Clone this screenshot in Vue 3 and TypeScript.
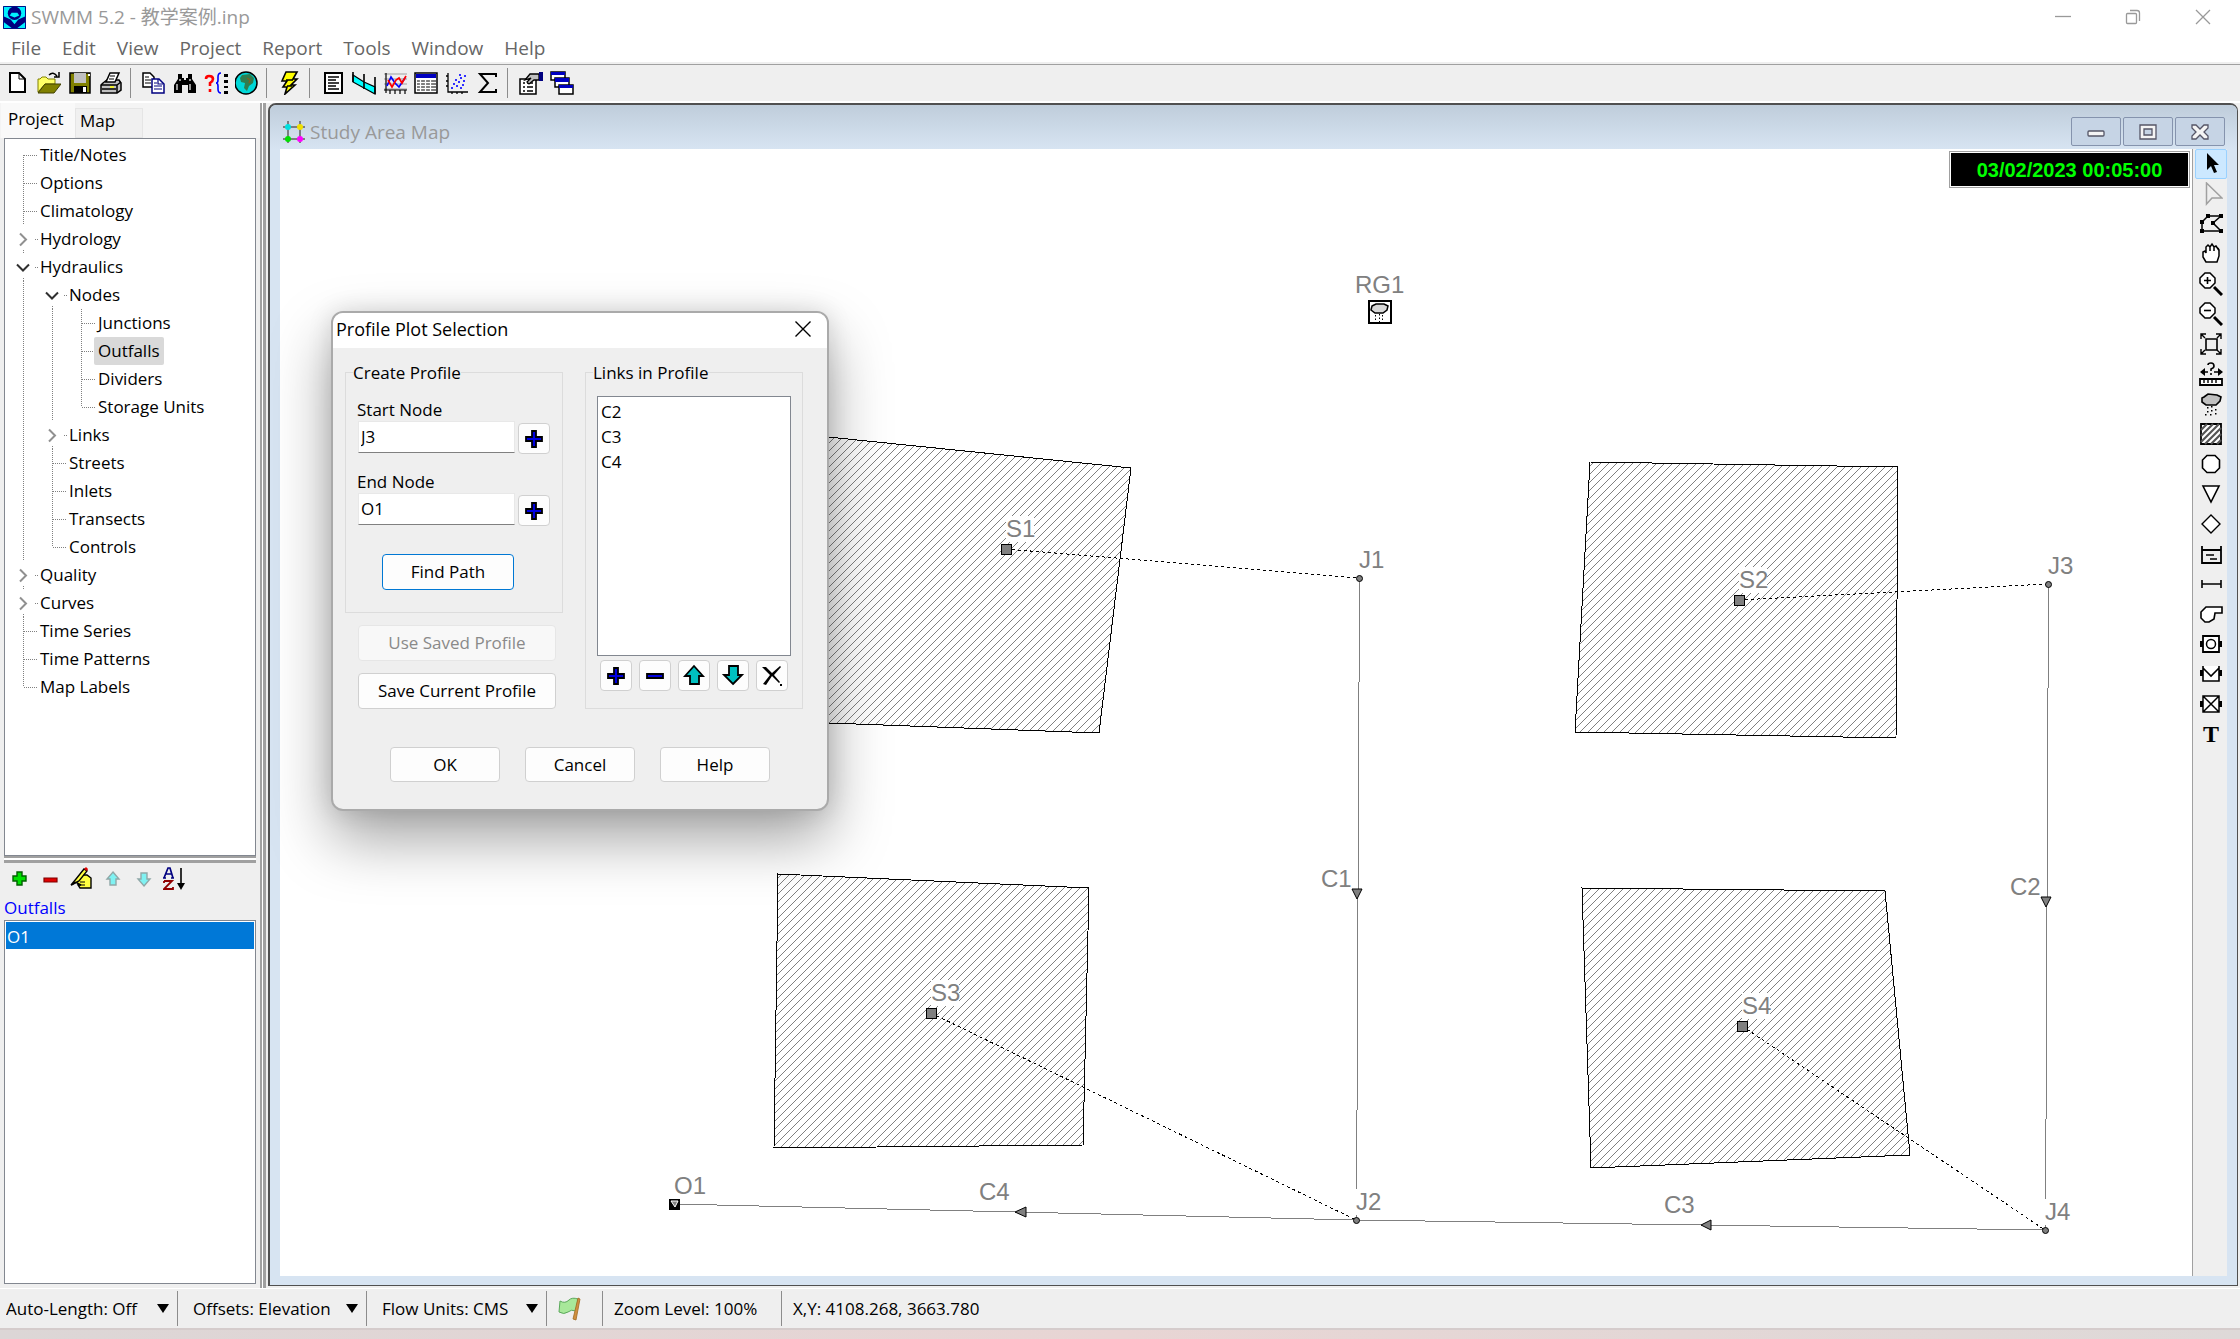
<script setup lang="ts">
import { ref } from 'vue'

/** One shape of an icon: path data, fill, stroke, stroke width */
type Shape = [d: string, fill: string, stroke?: string, width?: number]
interface Tool { name: string; shapes: Shape[] }
interface TreeRow { label: string; cells: string[]; selected?: boolean }

const K = '#000'
const N = 'none'

const menus = ['File', 'Edit', 'View', 'Project', 'Report', 'Tools', 'Window', 'Help']

const toolGroups: Tool[][] = [
  [
    { name: 'New', shapes: [['M4 2H13L19 8V21H4Z', '#fff', K, 2], ['M13 2V8H19', N, K, 1]] },
    { name: 'Open', shapes: [
      ['M1 21V8H3L5 6H9L11 8H18V13H8L1 21Z', '#ffff66', '#808000', 1],
      ['M1 22L8 13H24L17 22Z', '#808000', '#404000', 1],
      ['M12 4Q16 0 20 5M22 1V6H17', N, K, 1.5]] },
    { name: 'Save', shapes: [
      ['M2 2H22V22H2Z', '#808000', K, 1.5], ['M6 2H18V12H6Z', '#c0c0c0'],
      ['M6 15H19V22H6Z', K], ['M15 16H18V21H15Z', '#fff'], ['M20 3H22V5H20Z', '#fff']] },
    { name: 'Print', shapes: [
      ['M4 12L8 9H20L22 12V19L18 22H2V14Z', '#c0c0c0', K, 1.5],
      ['M7 11L11 2H20L16 11Z', '#fff', K, 1.5], ['M11 5H16M10 8H15', N, K, 1.2],
      ['M2 14H18V22M18 14L22 11M3 18H17', N, K, 1.5], ['M11 16H15', N, '#ffff00', 1.5]] },
  ],
  [
    { name: 'Copy', shapes: [
      ['M1 2H8L12 6V16H1Z', '#fff', K, 1.5], ['M3 6H7M3 9H9M3 12H9', N, K, 1.2],
      ['M10 8H17L22 13V22H10Z', '#fff', '#000080', 1.5], ['M16 8V13H21M12 12H15M12 15H20M12 18H20', N, '#000080', 1.2]] },
    { name: 'Find', shapes: [
      ['M5 3H9V7H11V9H13V7H15V3H19V8L23 14V22H15V14H9V22H1V14L5 8Z', K],
      ['M4 13V19M17 13V19M7 8V10M17 8V10', N, '#fff', 1.2]] },
    { name: 'Query', shapes: [
      ['M2 8Q2 5 5 5Q9 5 9 8Q9 10 6 12V15M6 18V21', N, '#ff0000', 2.6],
      ['M17 2Q14 2 14 6V9Q14 12 12 12Q14 12 14 15V18Q14 22 17 22', N, '#0000ff', 1.6],
      ['M20 3H24V6H20ZM20 9H24V12H20ZM20 15H24V17H20ZM20 20H24V23H20Z', K]] },
    { name: 'World', shapes: [
      ['M11 1A11 11 0 1 1 11 23A11 11 0 1 1 11 1Z', '#00d8d8', K, 1.5],
      ['M7 4L15 3L19 7L18 12L14 15L12 20L9 17L10 12L6 11L5 7Z', '#2f7d4f'],
      ['M12 7L15 9L14 12', N, '#806020', 1.4]] },
  ],
  [
    { name: 'Run', shapes: [['M8 1H19L15 8H19L13 14H17L7 23L9 16H5L9 10H4Z', '#ffff00', K, 1.6], ['M8 9H15M9 15H14', N, K, 1.4]] },
  ],
  [
    { name: 'Report', shapes: [['M4 2H21V22H4Z', '#fff', K, 2], ['M7 6H18M7 9H15M7 12H18M7 15H15M7 18H18', N, K, 1.3]] },
    { name: 'Profile', shapes: [
      ['M1 4L12 11L23 16V23L12 17L1 11Z', '#00ffff', K, 1.2],
      ['M1 1V11M12 3V18M23 6V23', N, K, 1.6]] },
    { name: 'Graph', shapes: [
      ['M1 3H24M1 8H24M1 13H24M1 18H24', N, '#a0a0a0', 1.2], ['M3 2V22M1 19H24M7 19V23M12 19V23M17 19V23M22 19V23', N, K, 1.2],
      ['M4 15L8 6L12 12L16 16L22 7', N, '#0000ff', 1.7], ['M5 9L9 16L13 9L16 7L19 12L23 5', N, '#ff0000', 1.7]] },
    { name: 'Table', shapes: [
      ['M1 2H23V22H1Z', '#fff', K, 1.5], ['M2 3H22V7H2Z', '#0000c0'],
      ['M3 10H22M3 13H22M3 16H22M3 19H22', N, K, 1.2], ['M6.5 8V21M11.5 8V21M16.5 8V21', N, '#fff', 1.2]] },
    { name: 'Scatter', shapes: [
      ['M3 2V21H23M1 5H3M1 10H3M1 15H3M7 21V23M12 21V23M17 21V23', N, K, 1.3],
      ['M6 16H8V18H6ZM8 12H10V14H8ZM11 14H13V16H11ZM13 10H15V12H13ZM10 8H12V10H10ZM15 6H17V8H15ZM18 9H20V11H18ZM19 4H21V6H19ZM14 3H16V5H14ZM17 13H19V15H17ZM15 16H17V18H15Z', '#3030ff']] },
    { name: 'Statistics', shapes: [['M20 6V3H4L12 12L4 21H20V18', N, K, 2]] },
  ],
  [
    { name: 'Options', shapes: [
      ['M1 8H17V23H1Z', '#fff', K, 1.5], ['M4 12H6M8 12H14M4 16H6M8 16H14M4 20H6M8 20H14', N, K, 1.4],
      ['M6 9L11 3H20V9H15L10 13L8 11L12 7Z', '#c0c0c0', K, 1.3], ['M20 1H24V10H20Z', '#000080']] },
    { name: 'Windows', shapes: [
      ['M1 1H15V9H1Z', '#fff', K, 1.5], ['M1 1H15V4H1Z', '#0000c0'],
      ['M5 7H19V16H5Z', '#fff', K, 1.5], ['M5 7H19V11H5Z', '#0000c0'],
      ['M9 14H23V23H9Z', '#fff', K, 1.5], ['M9 14H23V17H9Z', '#0000c0']] },
  ],
]

const mapTools: Tool[] = [
  { name: 'Select Object', shapes: [['M8 1V18L12 14L15 21L18 20L15 13H20Z', K]] },
  { name: 'Select Vertex', shapes: [['M7.5 1V22L13 16H23Z', N, '#a0a0a0', 1.5]] },
  { name: 'Select Region', shapes: [
    ['M9 4H22L14 11L22 19H3V10L9 4', N, K, 1.5],
    ['M7 2H11V6H7ZM20 2H24V6H20ZM1 8H5V12H1ZM12 9H16V13H12ZM1 17H5V21H1ZM20 17H24V21H20Z', K]] },
  { name: 'Pan', shapes: [['M7 20L4 15V10L6 9L7 11V5L9 3L11 5L13 2L15 5L17 4L19 7V6L20 8V14L18 20ZM11 5V9M15 5V9', '#fff', K, 1.5]] },
  { name: 'Zoom In', shapes: [['M6 1H11L16 6V11L11 16H6L1 11V6Z', '#fff', K, 1.5], ['M8.5 5V12M5 8.5H12', N, K, 1.6], ['M15 15L23 23', N, K, 3]] },
  { name: 'Zoom Out', shapes: [['M6 1H11L16 6V11L11 16H6L1 11V6Z', '#fff', K, 1.5], ['M5 8.5H12', N, K, 1.6], ['M15 15L23 23', N, K, 3]] },
  { name: 'Full Extent', shapes: [['M7 7H18V18H7Z', N, K, 1.6], ['M2 7V2H7M2 2L6 6M17 2H22V7M22 2L18 6M2 17V22H7M2 22L6 18M22 17V22H17M22 22L18 18', N, K, 1.4]] },
  { name: 'Measure', shapes: [
    ['M1 17H23V23H1Z', '#fff', K, 1.8], ['M5 17V21M9 17V21M13 17V21M17 17V21', N, K, 1.4],
    ['M9 3Q9 1 12 1Q15 1 15 4Q15 6 12 7V9M12 11V13', N, K, 1.6], ['M2 10H9M15 10H23', N, K, 1.6],
    ['M1 10L6 6V14ZM24 10L19 6V14Z', K]] },
  { name: 'Rain Gage', shapes: [
    ['M5 5L9 2L18 3L22 5L21 9L17 13H7L3 10V6Z', '#c0c0c0', K, 1.6],
    ['M8 15H9.5V16.5H8ZM12 14H13.5V15.5H12ZM8 19H9.5V20.5H8ZM12 18H13.5V19.5H12ZM16 17H17.5V18.5H16ZM6 22H7.5V23.5H6ZM11 22H12.5V23.5H11ZM16 21H17.5V22.5H16Z', K]] },
  { name: 'Subcatchment', shapes: [['M2 2H22V22H2Z', '#fff', K, 1.8], ['M2 8L8 2M2 14L14 2M2 20L20 2M6 22L22 6M12 22L22 12M18 22L22 18', N, '#555', 2.2]] },
  { name: 'Junction', shapes: [['M8 3.5H16L20.5 8V16L16 20.5H8L3.5 16V8Z', '#fff', K, 1.6]] },
  { name: 'Outfall', shapes: [['M4 4H20L12 20Z', '#fff', K, 1.6]] },
  { name: 'Divider', shapes: [['M12 3L21 12L12 21L3 12Z', '#fff', K, 1.4]] },
  { name: 'Storage Unit', shapes: [['M3 4V21H22V4M3 8H22', N, K, 1.8], ['M7 13H15M11 17H18', N, K, 1.6]] },
  { name: 'Conduit', shapes: [['M3 12H22M3 8V16M22 8V16', N, K, 1.6]] },
  { name: 'Pump', shapes: [['M23 5V11H16L15 17L10 20H6L2 16V10L7 5Z', '#fff', K, 1.6]] },
  { name: 'Orifice', shapes: [['M4 4H20V20H4Z', '#fff', K, 1.8], ['M12 7.5A4.5 4.5 0 1 1 12 16.5A4.5 4.5 0 1 1 12 7.5Z', N, K, 1.5], ['M1 9H4V15H1ZM20 9H23V15H20Z', K]] },
  { name: 'Weir', shapes: [['M4 4V19H20V4M4 6L12 14L20 6', '#fff', K, 1.6], ['M1 8H4V14H1ZM20 8H23V14H20Z', K]] },
  { name: 'Outlet', shapes: [['M4 4H20V20H4ZM4 4L20 20M20 4L4 20', '#fff', K, 1.5], ['M1 9H4V15H1ZM20 9H23V15H20Z', K]] },
  { name: 'Label', shapes: [] },
]

const objectTools: Tool[] = [
  { name: 'Add', shapes: [['M9 5H14V9H18V14H14V18H9V14H5V9H9Z', '#00e000', '#006000', 1.4]] },
  { name: 'Delete', shapes: [['M5 11H18V15H5Z', '#e00000', '#800000', 1.2]] },
  { name: 'Edit', shapes: [
    ['M6 13L12 8H17L21 11V21H10L8 18H11L7 16Z', '#ffff40', K, 1.4],
    ['M1 18L6 12L14 2L17 4L9 14L5 16Z', '#ffff40', K, 1.4], ['M14 2L16 0L18 2L17 4Z', '#e00000'],
    ['M1 19L5 14L6 16Z', K], ['M9 18H15M10 15H15', N, K, 1.2]] },
  { name: 'Move Up', shapes: [['M12 5L18 12H15V18H9V12H6Z', '#7ff2f2', '#90a8a8', 1.4]] },
  { name: 'Move Down', shapes: [['M12 19L18 12H15V6H9V12H6Z', '#7ff2f2', '#90a8a8', 1.4]] },
  { name: 'Sort', shapes: [
    ['M1 11L5 1H7L10 11M3 7H9M0 11H3M8 11H11', N, '#000080', 1.7],
    ['M1 14H9L1 22H10V20M1 14V16', N, '#900000', 1.8],
    ['M18 1V20', N, K, 1.6], ['M14 16H22L18 23Z', K]] },
]

const plus: Shape[] = [['M10 4H14V10H20V14H14V20H10V14H4V10H10Z', '#0000e0', K, 1.8]]
const linkTools: Tool[] = [
  { name: 'Add link', shapes: plus },
  { name: 'Remove link', shapes: [['M4 10H20V14H4Z', '#0000e0', K, 1.8]] },
  { name: 'Move link up', shapes: [['M12 2L21 12H17V20H8V12H3Z', '#00c0c0', K, 1.8]] },
  { name: 'Move link down', shapes: [['M12 20L21 11H17V2H8V11H3Z', '#00c0c0', K, 1.8]] },
  { name: 'Clear links', shapes: [['M2 3L6 3L12 9L20 2L21 3L14 11L20 18L19 19L12 12L6 21L3 20L10 11Z', K], ['M20 20H22V22H20Z', K]] },
]

const tree: TreeRow[] = [
  { label: 'Title/Notes', cells: ['first'] },
  { label: 'Options', cells: ['tee'] },
  { label: 'Climatology', cells: ['tee'] },
  { label: 'Hydrology', cells: ['closed'] },
  { label: 'Hydraulics', cells: ['open'] },
  { label: 'Nodes', cells: ['line', 'open'] },
  { label: 'Junctions', cells: ['line', 'line', 'tee'] },
  { label: 'Outfalls', cells: ['line', 'line', 'tee'], selected: true },
  { label: 'Dividers', cells: ['line', 'line', 'tee'] },
  { label: 'Storage Units', cells: ['line', 'line', 'end'] },
  { label: 'Links', cells: ['line', 'closed'] },
  { label: 'Streets', cells: ['line', 'tee'] },
  { label: 'Inlets', cells: ['line', 'tee'] },
  { label: 'Transects', cells: ['line', 'tee'] },
  { label: 'Controls', cells: ['line', 'end'] },
  { label: 'Quality', cells: ['closed'] },
  { label: 'Curves', cells: ['closed'] },
  { label: 'Time Series', cells: ['tee'] },
  { label: 'Time Patterns', cells: ['tee'] },
  { label: 'Map Labels', cells: ['end'] },
]
const guides: Record<string, string> = {
  first: 'M13.5 14V28M14 14.5H28',
  tee: 'M13.5 0V28M14 14.5H28',
  end: 'M13.5 0V14M14 14.5H28',
  line: 'M13.5 0V28',
  closed: 'M13.5 25V28M25 14.5H28',
  open: 'M13.5 25V28M25 14.5H28',
}

const areas = [
  '640,420 828,437 1131,468 1099,733 640,716',
  '1590,462 1898,467 1896,738 1575,732',
  '778,874 1089,888 1083,1145 774,1148',
  '1582,888 1885,891 1910,1155 1591,1168',
]
const centroids = [[1006, 549], [1739, 600], [931, 1013], [1742, 1026]]
const runoff = ['M1006 549L1359 578', 'M1739 600L2048 584', 'M931 1013L1356 1220', 'M1742 1026L2045 1230']
const conduits = ['M1359.5 578L1356.5 1220', 'M2048.5 584L2045.5 1230', 'M2045 1230L1356 1220', 'M1356 1220L674 1204']
const junctions = [[1359, 578], [2048, 584], [1356, 1220], [2045, 1230]]
const arrows = [
  'M1352 889H1362L1357 899Z', 'M2041 897H2051L2046 907Z',
  'M1711 1220V1230L1701 1225Z', 'M1026 1207V1217L1015 1212Z',
]
const mapLabels = [
  { t: 'RG1', x: 1355, y: 293 }, { t: 'S1', x: 1006, y: 537 }, { t: 'S2', x: 1739, y: 588 },
  { t: 'S3', x: 931, y: 1001 }, { t: 'S4', x: 1742, y: 1014 }, { t: 'J1', x: 1359, y: 568 },
  { t: 'J3', x: 2048, y: 574 }, { t: 'J2', x: 1356, y: 1210 }, { t: 'J4', x: 2045, y: 1220 },
  { t: 'C1', x: 1321, y: 887 }, { t: 'C2', x: 2010, y: 895 }, { t: 'C3', x: 1664, y: 1213 },
  { t: 'C4', x: 979, y: 1200 }, { t: 'O1', x: 674, y: 1194 },
]

const startNode = ref('J3')
const endNode = ref('O1')
const currentObject = ref('O1')
const links = ['C2', 'C3', 'C4']
</script>

<template>
  <div class="app">
    <header class="titlebar">
      <svg class="logo" viewBox="0 0 24 24">
        <rect width="24" height="24" fill="#00f0ff" />
        <circle cx="12" cy="7.5" r="7" fill="#000080" />
        <path d="M1 11L8 14L12 19L16 14L23 11V17L15 23H9L1 17Z" fill="#000080" />
        <path d="M7 10L9 7H15L17 10L12 12Z" fill="#00f0ff" />
        <path d="M0.5 0.5H23.5V23.5H0.5Z" stroke="#000080" />
      </svg>
      <h1>SWMM 5.2 - 教学案例.inp</h1>
      <button class="win" aria-label="Minimize"><svg viewBox="0 0 16 16"><path d="M0 7.5H16" /></svg></button>
      <button class="win" aria-label="Restore"><svg viewBox="0 0 16 16"><path d="M2.5 4.5H10.5Q11.5 4.5 11.5 5.5V13.5Q11.5 14.5 10.5 14.5H2.5Q1.5 14.5 1.5 13.5V5.5Q1.5 4.5 2.5 4.5ZM5 1.5H12Q14.5 1.5 14.5 4V12" /></svg></button>
      <button class="win" aria-label="Close"><svg viewBox="0 0 16 16"><path d="M1 1L15 15M15 1L1 15" /></svg></button>
    </header>

    <nav class="menubar">
      <button v-for="m in menus" :key="m">{{ m }}</button>
    </nav>

    <div class="toolbar" role="toolbar">
      <div v-for="(g, i) in toolGroups" :key="i" class="group">
        <button v-for="t in g" :key="t.name" :aria-label="t.name">
          <svg class="ico" viewBox="0 0 24 24"><path v-for="(s, k) in t.shapes" :key="k" :d="s[0]" :fill="s[1]" :stroke="s[2]" :stroke-width="s[3]" /></svg>
        </button>
      </div>
    </div>

    <div class="work">
      <aside class="side">
        <div class="tabs" role="tablist">
          <button class="tab on" role="tab">Project</button>
          <button class="tab" role="tab">Map</button>
        </div>
        <ul class="tree" role="tree">
          <li v-for="r in tree" :key="r.label" role="treeitem">
            <svg v-for="(c, k) in r.cells" :key="k" class="guide" viewBox="0 0 29 28">
              <path class="dots" :d="guides[c]" />
              <path v-if="c === 'closed'" d="M10 8.5L16 14.5L10 20.5" stroke="#909090" />
              <path v-if="c === 'open'" d="M7 11.5L13 17.5L19 11.5" stroke="#303030" />
            </svg>
            <span :class="{ sel: r.selected }">{{ r.label }}</span>
          </li>
        </ul>
        <div class="hsplit"></div>
        <div class="objtools" role="toolbar">
          <button v-for="t in objectTools" :key="t.name" :aria-label="t.name">
            <svg class="ico" viewBox="0 0 24 24"><path v-for="(s, k) in t.shapes" :key="k" :d="s[0]" :fill="s[1]" :stroke="s[2]" :stroke-width="s[3]" /></svg>
          </button>
        </div>
        <label class="objlabel" for="objects">Outfalls</label>
        <select id="objects" v-model="currentObject" class="objects" size="8">
          <option>O1</option>
        </select>
      </aside>

      <div class="vsplit"></div>

      <main class="child">
        <div class="childbar">
          <svg class="mapico" viewBox="0 0 22 22">
            <path d="M5 0V22M17 0V22M0 6H22M0 18H22" stroke="#606060" stroke-width="1.5" />
            <circle cx="5" cy="6" r="3" fill="#00e0e0" /><circle cx="17" cy="6" r="3" fill="#f0e000" />
            <circle cx="5" cy="18" r="3" fill="#00e000" /><circle cx="17" cy="18" r="3" fill="#ff00ff" />
          </svg>
          <h2>Study Area Map</h2>
          <button aria-label="Minimize map"><svg viewBox="0 0 20 20"><rect x="2" y="9" width="16" height="5" rx="1" /></svg></button>
          <button aria-label="Maximize map"><svg viewBox="0 0 20 20"><path fill-rule="evenodd" d="M2 3H18V17H2ZM6 7V13H14V7Z" /></svg></button>
          <button aria-label="Close map"><svg viewBox="0 0 20 20"><path d="M2 3H6L10 7L14 3H18V6L14 10L18 14V17H14L10 13L6 17H2V14L6 10L2 6Z" /></svg></button>
        </div>
        <div class="childbody">
          <div class="canvas">
            <svg class="map" role="img" aria-label="Study area">
              <defs>
                <pattern id="hatch" width="8" height="8" patternUnits="userSpaceOnUse">
                  <path d="M-1 9L9 -1" stroke="#808080" stroke-width="1" shape-rendering="crispEdges" />
                </pattern>
              </defs>
              <g transform="translate(-280 -149)">
                <polygon v-for="a in areas" :key="a" :points="a" fill="url(#hatch)" stroke="#000" shape-rendering="crispEdges" />
                <path v-for="d in conduits" :key="d" :d="d" stroke="#808080" shape-rendering="crispEdges" />
                <path v-for="d in arrows" :key="d" :d="d" fill="#808080" stroke="#000" />
                <template v-for="l in mapLabels" :key="l.t">
                  <rect :x="l.x" :y="l.y - 21" :width="l.t.length * 14" height="26" fill="#fff" />
                </template>
                <path v-for="d in runoff" :key="d" :d="d" stroke="#000" stroke-dasharray="3 3" shape-rendering="crispEdges" />
                <rect v-for="(c, i) in centroids" :key="i" :x="c[0] - 4.5" :y="c[1] - 4.5" width="10" height="10" fill="#808080" stroke="#000" />
                <circle v-for="(j, i) in junctions" :key="i" :cx="j[0] + 0.5" :cy="j[1] + 0.5" r="3" fill="#808080" stroke="#000" />
                <rect x="669" y="1199" width="11" height="11" fill="#000" />
                <path d="M671 1201H678L675 1207Z" fill="#808080" stroke="#fff" />
                <rect x="1369" y="301" width="22" height="22" fill="#fff" stroke="#000" stroke-width="2" />
                <path d="M1372 306L1376 304H1384L1388 306L1387 310L1383 313H1375L1371 310Z" fill="#d8d8d8" stroke="#000" stroke-width="1.5" />
                <path d="M1375.5 315V322M1379.5 314V322M1382.5 315V321" stroke="#000" stroke-dasharray="1.5 2" />
                <text v-for="l in mapLabels" :key="l.t" :x="l.x" :y="l.y">{{ l.t }}</text>
              </g>
            </svg>
            <time class="clock">03/02/2023 00:05:00</time>
          </div>
          <div class="maptools" role="toolbar">
            <button v-for="(t, i) in mapTools" :key="t.name" :class="{ on: i === 0 }" :aria-label="t.name">
              <svg v-if="t.shapes.length" class="ico" viewBox="0 0 24 24"><path v-for="(s, k) in t.shapes" :key="k" :d="s[0]" :fill="s[1]" :stroke="s[2]" :stroke-width="s[3]" /></svg>
              <b v-else>T</b>
            </button>
          </div>
        </div>
      </main>
    </div>

    <footer class="status">
      <div class="cell c1"><select aria-label="Auto-Length"><option>Auto-Length: Off</option></select><i></i></div>
      <div class="cell c2"><select aria-label="Offsets"><option>Offsets: Elevation</option></select><i></i></div>
      <div class="cell c3"><select aria-label="Flow Units"><option>Flow Units: CMS</option></select><i></i></div>
      <div class="cell c4">
        <svg class="ico" viewBox="0 0 24 24">
          <path d="M2 4Q7 7 11 3Q14 0 20 2L18 14Q13 12 10 15Q6 18 1 15Z" fill="#a8e89a" stroke="#5aa85a" />
          <path d="M20 1L22 2L18 23L15 22Z" fill="#d09040" stroke="#a06820" stroke-width="0.8" />
        </svg>
      </div>
      <div class="cell c5">Zoom Level: 100%</div>
      <div class="cell c6">X,Y: 4108.268, 3663.780</div>
    </footer>
    <div class="desktop"></div>

    <section class="dialog" role="dialog" aria-label="Profile Plot Selection">
      <header>
        <h3>Profile Plot Selection</h3>
        <button aria-label="Close dialog"><svg viewBox="0 0 16 16"><path d="M0.5 0.5L15.5 15.5M15.5 0.5L0.5 15.5" stroke="#000" stroke-width="1.4" /></svg></button>
      </header>
      <div class="cols">
        <div class="left">
          <fieldset class="create">
            <legend>Create Profile</legend>
            <label for="start">Start Node</label>
            <div class="field">
              <input id="start" v-model="startNode" type="text" />
              <button class="push icon" aria-label="Pick start node"><svg class="ico" viewBox="0 0 24 24"><path v-for="(s, k) in plus" :key="k" :d="s[0]" :fill="s[1]" :stroke="s[2]" :stroke-width="s[3]" /></svg></button>
            </div>
            <label for="end">End Node</label>
            <div class="field">
              <input id="end" v-model="endNode" type="text" />
              <button class="push icon" aria-label="Pick end node"><svg class="ico" viewBox="0 0 24 24"><path v-for="(s, k) in plus" :key="k" :d="s[0]" :fill="s[1]" :stroke="s[2]" :stroke-width="s[3]" /></svg></button>
            </div>
            <button class="push find">Find Path</button>
          </fieldset>
          <button class="push wide" disabled>Use Saved Profile</button>
          <button class="push wide">Save Current Profile</button>
        </div>
        <fieldset class="links">
          <legend>Links in Profile</legend>
          <select multiple aria-label="Links in Profile">
            <option v-for="l in links" :key="l">{{ l }}</option>
          </select>
          <div class="linktools">
            <button v-for="t in linkTools" :key="t.name" class="push icon" :aria-label="t.name">
              <svg class="ico" viewBox="0 0 24 24"><path v-for="(s, k) in t.shapes" :key="k" :d="s[0]" :fill="s[1]" :stroke="s[2]" :stroke-width="s[3]" /></svg>
            </button>
          </div>
        </fieldset>
      </div>
      <div class="actions">
        <button class="push">OK</button>
        <button class="push">Cancel</button>
        <button class="push">Help</button>
      </div>
    </section>
  </div>
</template>

<style>
body { margin: 0; }
</style>

<style scoped>
.app {
  position: relative;
  display: flex;
  flex-direction: column;
  min-height: 100vh;
  background: #efefef;
  color: #000;
  font: 17px/24px "Open Sans", "Noto Sans CJK SC", sans-serif;
}
*, *::before, *::after { box-sizing: border-box; }
button, input, select { font: inherit; color: inherit; }
button { padding: 0; border: 0; background: none; }
h1, h2, h3 { margin: 0; font: inherit; }
svg { display: block; fill: none; }
.ico { width: 24px; height: 24px; flex: none; }

.titlebar { display: flex; align-items: center; height: 34px; padding: 0 2px 0 3px; background: #fff; color: #999; font-size: 19px; }
.logo { width: 23px; height: 23px; margin-right: 5px; }
.titlebar h1 { flex: 1; }
.win { display: grid; place-items: center; width: 70px; height: 34px; }
.win svg { width: 16px; height: 16px; stroke: #999; stroke-width: 1.3; }
.menubar { display: flex; height: 28px; background: #fff; color: #666; font-size: 19px; }
.menubar button { padding: 0 10px 0 11px; }

.toolbar { display: flex; height: 39px; margin-top: 2px; padding-left: 2px; border-top: 1px solid #a0a0a0; border-bottom: 2px solid #fff; }
.group { display: flex; align-items: center; }
.group button { display: grid; place-items: center; width: 31px; height: 36px; }
.group + .group { margin-left: 4px; }
.group + .group::before { content: ""; width: 1px; height: 30px; margin-right: 7px; background: #8c8c8c; }

.work { display: flex; flex: 1; }
.side { display: flex; flex-direction: column; width: 260px; padding: 0 4px; }
.tabs { display: flex; align-items: flex-end; height: 35px; margin: 0 -4px; padding-left: 1px; background: #f4f4f4; flex: none; }
.tab { height: 30px; padding: 0 4px 4px; width: 68px; text-align: left; border: 1px solid #e5e5e5; background: #f0f0f0; }
.tab.on { width: 74px; height: 35px; padding: 0 7px 4px; border: 0; background: #f9f9f9; }
.tree { flex: none; height: 718px; margin: 0; padding: 2px 0 0 5px; list-style: none; border: 1px solid #828790; background: #fff; }
.tree li { display: flex; height: 28px; line-height: 28px; }
.tree span { margin-left: -3px; padding: 0 4px; border-radius: 2px; white-space: nowrap; }
.tree .sel { background: #d9d9d9; }
.guide { width: 29px; height: 28px; flex: none; }
.guide path { stroke-width: 2; }
.guide .dots { stroke: #808080; stroke-width: 1; stroke-dasharray: 1 1; }
.hsplit { flex: none; height: 7px; border-top: 2px solid #a0a0a0; border-bottom: 3px solid #a0a0a0; background: #fff; }
.objtools { display: flex; align-items: center; height: 32px; flex: none; }
.objtools button { display: grid; place-items: center; width: 31px; }
.objlabel { height: 25px; line-height: 25px; color: #00f; }
.objects { flex: 1; width: 252px; margin-bottom: 4px; padding: 1px; border: 1px solid #828790; border-radius: 0; background: #fff; overflow: hidden; outline: 0; }
.objects option { min-height: 27px; padding: 3px 1px 0; line-height: 24px; }
.objects option:checked { color: #fff; background: #0078d7 linear-gradient(#0078d7, #0078d7); }
.vsplit { width: 6px; border-left: 2px solid #a0a0a0; border-right: 3px solid #a0a0a0; background: #fff; }

.child {
  display: flex; flex: 1; flex-direction: column; min-width: 0;
  margin: 0 2px 2px 2px; padding: 0 10px 9px 10px;
  border: 2px solid #505050; border-right-width: 1px; border-bottom-width: 1px;
  border-radius: 8px 8px 0 0; background: #d7e4f2;
}
.childbar { display: flex; align-items: center; height: 44px; gap: 2px; margin: 0 -10px; padding: 9px 12px 0 13px; background: linear-gradient(#bfcddb, #d7e4f2); border-radius: 6px 6px 0 0; color: #999; font-size: 19px; }
.mapico { width: 22px; height: 22px; }
.childbar h2 { flex: 1; padding-left: 3px; }
.childbar button { display: grid; place-items: center; width: 50px; height: 29px; border: 1px solid #8593ad; border-radius: 2px; background: #c6d4e5; }
.childbar button svg { width: 20px; height: 20px; fill: #f4f4f4; stroke: #556; stroke-width: 1.3; }
.childbody { display: flex; flex: 1; background: #fff; }
.canvas { position: relative; flex: 1; min-width: 0; }
.map { width: 100%; height: 100%; }
.map text { font: 24px "Liberation Sans", sans-serif; fill: #808080; }
.clock { position: absolute; top: 2px; right: 2px; width: 241px; height: 37px; border: 1px solid #a0a0a0; box-shadow: inset 0 0 0 1px #fff; background: #000; color: #0f0; font: bold 20px/36px "Liberation Sans", sans-serif; text-align: center; }
.maptools { width: 35px; padding-left: 2px; border-left: 1px solid #a0a0a0; background: #efefef; }
.maptools button { display: grid; place-items: center; width: 32px; height: 30px; border: 1px solid transparent; border-radius: 2px; }
.maptools .on { background: #cce8ff; border-color: #99d1ff; }
.maptools b { font: bold 24px/24px "Liberation Serif", serif; }

.status { display: flex; align-items: center; height: 40px; border-top: 1px solid #fff; }
.cell { display: flex; align-items: center; height: 35px; border-right: 1px solid #8c8c8c; white-space: nowrap; }
.cell select { flex: 1; min-width: 0; padding: 0; border: 0; background: none; appearance: none; }
.cell i { border: 6px solid transparent; border-top: 9px solid #000; border-bottom: 0; }
.c1 { width: 178px; padding: 0 8px 0 6px; }
.c2 { width: 189px; padding: 0 8px 0 15px; }
.c3 { width: 180px; padding: 0 8px 0 15px; }
.c4 { width: 56px; padding-left: 11px; }
.c5 { width: 179px; padding-left: 11px; }
.c6 { border: 0; padding-left: 11px; }
.desktop { height: 11px; border-top: 2px solid #d5cccc; background: linear-gradient(90deg, #dcd6d6, #e8d5d4 50%, #ded9d8); }

.dialog {
  position: absolute; left: 331px; top: 311px; width: 498px; height: 500px;
  border: 2px solid #aaa; border-radius: 12px; background: #efefef; overflow: hidden;
  box-shadow: 0 28px 60px rgba(0, 0, 0, 0.36), 0 0 24px rgba(0, 0, 0, 0.12);
}
.dialog header { display: flex; align-items: center; height: 35px; padding: 0 16px 3px 3px; background: #fff; }
.dialog h3 { flex: 1; font-size: 18px; }
.dialog header svg { width: 16px; height: 16px; }
.cols { display: flex; gap: 22px; padding: 11px 24px 0 12px; }
fieldset { width: 218px; min-width: 0; margin: 0; border: 1px solid #dcdcdc; }
legend { margin-left: -4px; padding: 2px 0 0; line-height: 24px; }
.create { height: 254px; padding: 13px 12px 0; }
.create legend { margin-left: -5px; }
.create label { display: block; height: 24px; margin-left: -1px; }
.field { display: flex; align-items: flex-end; gap: 3px; height: 32px; margin-bottom: 16px; }
.field input { width: 157px; height: 32px; margin-bottom: 1px; padding: 0 2px 2px; border: 1px solid #e8e8e8; border-bottom-color: #808080; background: #fff; outline: 0; }
.push { display: grid; place-items: center; height: 36px; border: 1px solid #d0d0d0; border-radius: 4px; background: #fdfdfd; }
.push.icon { width: 32px; height: 31px; flex: none; }
.find { width: 132px; margin: 28px 0 0 24px; border-color: #0078d4; }
.wide { width: 198px; margin: 12px 0 0 13px; }
.wide:disabled { border-color: #e6e6e6; background: #f8f8f8; color: #8a8a8a; }
.links { height: 350px; padding: 11px 11px 0; }
.links select { display: block; width: 194px; height: 260px; padding: 3px 2px; border: 1px solid #828790; border-radius: 0; background: #fff; overflow: hidden; outline: 0; }
.links option { min-height: 25px; padding: 0 1px; line-height: 25px; }
.linktools { display: flex; gap: 7px; padding: 4px 3px; }
.actions { display: flex; gap: 25px; padding: 38px 0 0 57px; }
.actions .push { width: 110px; height: 35px; }
</style>
